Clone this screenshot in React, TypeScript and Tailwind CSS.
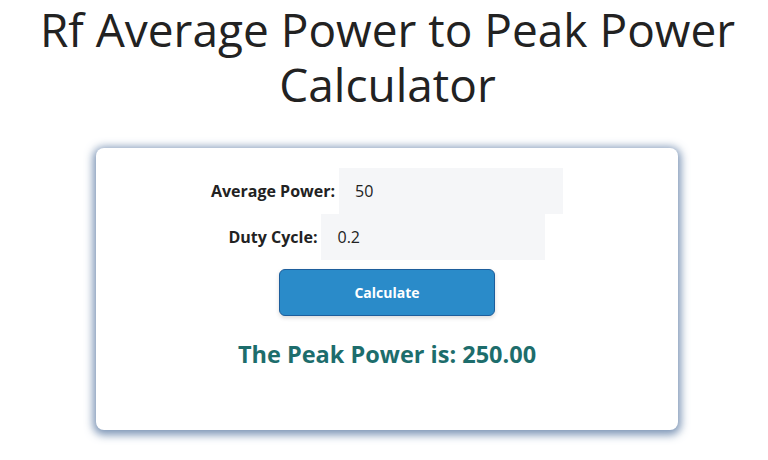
import { useState } from 'react'

export default function App() {
  const [avg, setAvg] = useState('50')
  const [duty, setDuty] = useState('0.2')
  const [peak, setPeak] = useState<string>('250.00')

  const calculate = () => {
    const a = parseFloat(avg)
    const d = parseFloat(duty)
    if (isNaN(a) || isNaN(d) || d === 0) return
    setPeak((a / d).toFixed(2))
  }

  return (
    <div className="min-h-screen bg-white font-['Open_Sans',sans-serif] text-[#222]">
      <h1 className="pt-[2px] pl-[34px] pr-[27px] text-center text-[46px] leading-[55px] font-normal text-[#222]">
        Rf Average Power to Peak Power Calculator
      </h1>

      {/* Calculator card */}
      <div className="mt-[36px] flex justify-center pl-[6px]">
        <div className="w-[582px] h-[282px] rounded-lg bg-white px-5 pt-5 shadow-[0_2px_9px_3px_rgba(95,125,165,0.8)]">
          <div className="flex items-center justify-center">
            <label className="mr-1 text-[16px] font-bold">Average Power:</label>
            <input
              value={avg}
              onChange={(e) => setAvg(e.target.value)}
              className="h-[46px] w-[224px] bg-[#f5f6f8] px-4 text-[16px] outline-none"
            />
          </div>
          <div className="flex items-center justify-center">
            <label className="mr-1 text-[16px] font-bold">Duty Cycle:</label>
            <input
              value={duty}
              onChange={(e) => setDuty(e.target.value)}
              className="h-[46px] w-[224px] bg-[#f5f6f8] px-4 text-[16px] outline-none"
            />
          </div>
          <div className="flex justify-center">
            <button
              onClick={calculate}
              className="mt-[9px] h-[47px] w-[216px] rounded-md border border-[#1d5e9c] bg-[#2a8bc9] text-[14px] font-bold text-white shadow-[0_2px_4px_rgba(0,0,0,0.15)]"
            >
              Calculate
            </button>
          </div>
          <p className="mt-[21px] text-center text-[23.5px] font-bold text-[#1d6d6c]">
            The Peak Power is: {peak}
          </p>
        </div>
      </div>
    </div>
  )
}
